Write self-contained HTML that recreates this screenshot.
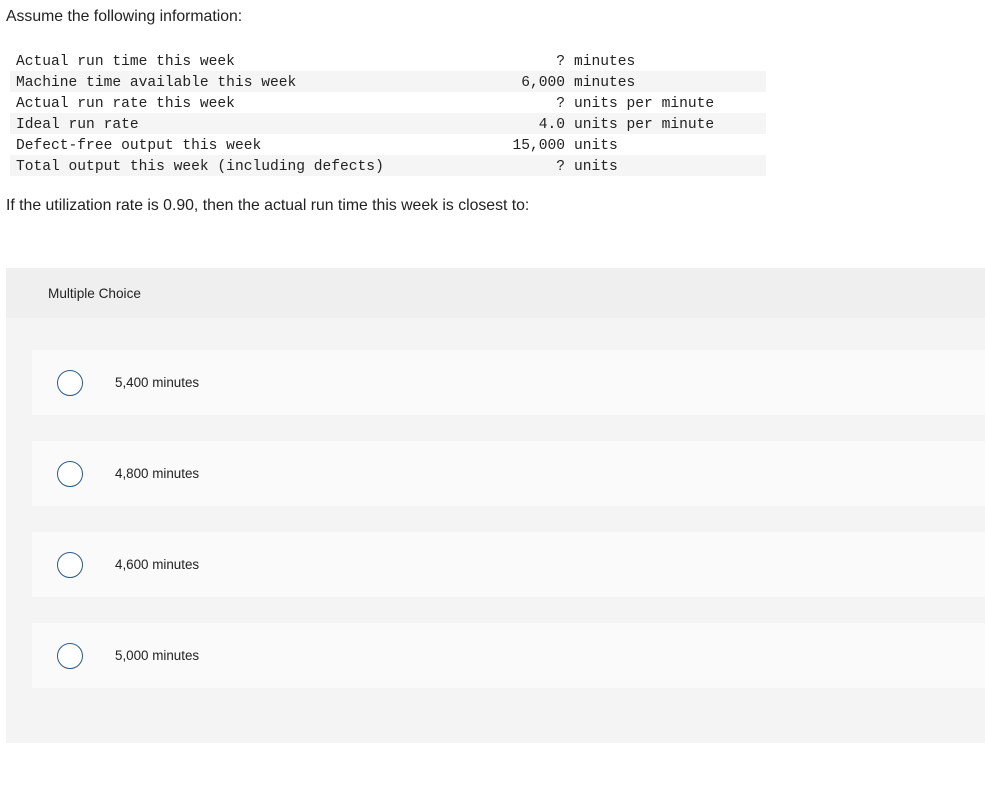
<!DOCTYPE html>
<html><head><style>
body{margin:0;background:#fff;font-family:"Liberation Sans",Arial,sans-serif;color:#222;}
.t{position:absolute;font-size:14px;}
.row{position:absolute;left:10px;width:756px;height:21px;font-family:"Liberation Mono",monospace;font-size:14.6px;line-height:21px;color:#222;}
.row.s{background:#f5f5f5;}
.row span{top:2px;}
.row .l{position:absolute;left:6px;}
.row .r{position:absolute;right:201px;text-align:right;}
.row .u{position:absolute;left:564px;}
.panel{position:absolute;left:6px;top:268px;width:979px;height:475px;background:#f4f4f4;}
.hdr{position:absolute;left:0;top:0;width:979px;height:50px;background:#efefef;}
.opt{position:absolute;left:26px;width:953px;height:65px;background:#fafafa;}
.c{position:absolute;left:25px;top:20px;width:24px;height:24px;border:1.5px solid #2d5a86;border-radius:50%;background:#fff;}
.ot{position:absolute;left:83px;top:25px;font-size:13.4px;color:#222;}
</style></head><body>
<div class="t" style="left:6px;top:8px;font-size:15.8px">Assume the following information:</div>
<div class="row" style="top:50px"><span class="l">Actual run time this week</span><span class="r">?</span><span class="u">minutes</span></div>
<div class="row s" style="top:71px"><span class="l">Machine time available this week</span><span class="r">6,000</span><span class="u">minutes</span></div>
<div class="row" style="top:92px"><span class="l">Actual run rate this week</span><span class="r">?</span><span class="u">units per minute</span></div>
<div class="row s" style="top:113px"><span class="l">Ideal run rate</span><span class="r">4.0</span><span class="u">units per minute</span></div>
<div class="row" style="top:134px"><span class="l">Defect-free output this week</span><span class="r">15,000</span><span class="u">units</span></div>
<div class="row s" style="top:155px"><span class="l">Total output this week (including defects)</span><span class="r">?</span><span class="u">units</span></div>
<div class="t" style="left:6px;top:197px;font-size:15.8px">If the utilization rate is 0.90, then the actual run time this week is closest to:</div>
<div class="panel">
<div class="hdr"><div class="t" style="left:42px;top:18px;font-size:13.6px">Multiple Choice</div></div>
<div class="opt" style="top:82px"><div class="c"></div><div class="ot">5,400 minutes</div></div>
<div class="opt" style="top:173px"><div class="c"></div><div class="ot">4,800 minutes</div></div>
<div class="opt" style="top:264px"><div class="c"></div><div class="ot">4,600 minutes</div></div>
<div class="opt" style="top:355px"><div class="c"></div><div class="ot">5,000 minutes</div></div>
</div>
</body></html>
